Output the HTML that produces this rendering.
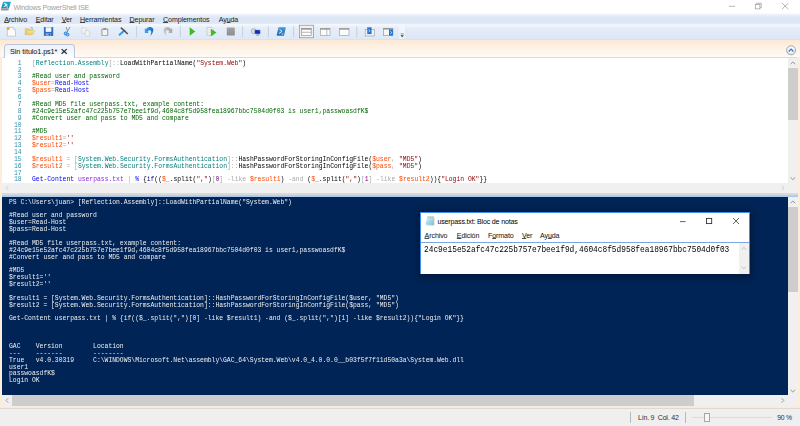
<!DOCTYPE html>
<html lang="es">
<head>
<meta charset="utf-8">
<title>Windows PowerShell ISE</title>
<style>
*{margin:0;padding:0;box-sizing:border-box}
html,body{width:800px;height:426px;overflow:hidden;background:#fff}
body{position:relative;font-family:"Liberation Sans",sans-serif;color:#000}
.abs{position:absolute}
#titlebar{left:0;top:0;width:800px;height:13px;background:#fff}
#title{left:13.4px;top:2.5px;font-size:7.2px;line-height:9px;color:#a0a0a0;white-space:nowrap;letter-spacing:-0.25px}
#menubar{left:0;top:13px;width:800px;height:11px;background:linear-gradient(#fbfcfe 0,#e6eef9 2.5px,#dce6f5 4.5px,#dce6f5 10px,#e6eef9 11px)}
.mi{position:absolute;top:15.8px;font-size:7.1px;line-height:9px;white-space:nowrap;color:#1a1a1a;letter-spacing:-0.1px}
.mi u{text-decoration:underline;text-decoration-thickness:0.5px;text-underline-offset:0.2px;text-decoration-color:rgba(0,0,0,.7)}
#toolbar{left:0;top:23.6px;width:800px;height:17.6px;background:linear-gradient(#e6eef9 0,#f1f6fc 0.7px,#f0f5fc 2.3px,#e5edf9 3.1px,#dce6f4 15.4px,#c6d1e2 15.9px,#c6d1e2 17.6px)}
#tbgroup{left:0;top:24.4px;width:398.5px;height:14.8px;background:linear-gradient(#f4f8fd 0,#eff4fb 2.2px,#e6eef9 3.4px,#dfe8f6 14.8px)}
#tbover{left:398.5px;top:24.4px;width:6.6px;height:14.8px;border-radius:0 2px 2px 0;background:linear-gradient(#f4f8fd,#e8f0fa)}
#tabstrip{left:0;top:40.4px;width:800px;height:17px;background:linear-gradient(#fde8d4 0,#fdeedf 5px,#fef6ee 12px,#fffaf5 17px)}
#tabline{left:0;top:57px;width:800px;height:1px;background:#dadada}
#leftb{left:0;top:57px;width:3px;height:351px;background:#fdeddb}
#rightb{left:797px;top:57px;width:3px;height:351px;background:#fdeddb}
#tab{left:4.2px;top:43.6px;width:70.6px;height:14.4px;border:0.8px solid #bcc6d6;border-bottom:none;border-radius:3.5px 3.5px 0 0;background:linear-gradient(#edf3fc,#f1f6fc 50%,#ffffff)}
#tabtxt{left:10.1px;top:47px;font-size:7.3px;line-height:9px;white-space:nowrap;color:#111;letter-spacing:-0.12px}
#editor{left:1.9px;top:58px;width:786.4px;height:125px;background:#fff}
pre{font-family:"Liberation Mono",monospace;font-size:10.89px;line-height:11.73px;white-space:pre;position:absolute;transform:scale(0.5857);transform-origin:0 0}
#ln{left:11.9px;top:60.2px;width:16.4px;text-align:right;color:#2b91af}
#code{left:32.1px;top:60.2px;color:#000}
.c{color:#006400}.v{color:#ff4500}.k{color:#0000ff}.t{color:#008080}.s{color:#8b0000}.g{color:#a9a9a9}.p{color:#8a2be2}.n{color:#800080}.d{color:#00008b}
#evs{left:788.2px;top:58px;width:9.5px;height:125px;background:#f0f0f0}
#evthumb{left:788.2px;top:67.5px;width:9.5px;height:52px;background:#cdcdcd}
#ehs{left:1.9px;top:183px;width:795.8px;height:10px;background:#f0f0f0}
#split1{left:2.3px;top:192.9px;width:795.4px;height:2.2px;background:#d9d9d9;z-index:2}
#split2{left:2.3px;top:194.6px;width:795.4px;height:2px;background:linear-gradient(#b3d2f3,#a8caf0 75%,#94b8e4);z-index:2}
#console{left:2.3px;top:196.2px;width:786px;height:199.3px;background:#012456}
#cout{left:8.9px;top:199.2px;color:#f0f0f0}
#cvs{left:787.8px;top:196.2px;width:9.9px;height:199.3px;background:#f0f0f0}
#cvthumb{left:787.8px;top:206.8px;width:9.9px;height:84.8px;background:#cdcdcd}
#chs{left:2.3px;top:395.4px;width:795.4px;height:11px;background:#f0f0f0}
#chthumb{left:12px;top:395.4px;width:681.8px;height:11px;background:#cdcdcd}
#botb{left:0;top:405.5px;width:800px;height:3px;background:#fbecda}
#status{left:0;top:407.8px;width:800px;height:18.2px;background:#efefef;border-top:1px solid #dadada}
.st{position:absolute;font-size:7.05px;line-height:9px;white-space:nowrap;color:#2e2e2e;letter-spacing:-0.22px}
.sep{position:absolute;width:0.8px;background:#b8b8b8}
svg{position:absolute;overflow:visible}
/* notepad */
#npshadow{left:417px;top:210.5px;width:336px;height:68px;border-radius:4px;background:rgba(0,8,30,0.35);filter:blur(2.5px)}
#np{left:420px;top:212.3px;width:330px;height:62.1px;background:#fff;border:0.9px solid #3f8dea}
#nptitle{left:437.5px;top:217.6px;font-size:7.1px;line-height:9px;white-space:nowrap;color:#000;letter-spacing:-0.19px}
.nm{position:absolute;top:232.2px;font-size:7.1px;line-height:9px;white-space:nowrap;color:#111;letter-spacing:-0.12px}
.nm u{text-decoration:underline;text-decoration-thickness:0.5px;text-underline-offset:0.2px;text-decoration-color:rgba(0,0,0,.7)}
#nptext{left:420.7px;top:242.3px;width:328.6px;height:31.3px;border-top:0.7px solid #7aa7dd;background:#fff}
#npvs{left:739.2px;top:243px;width:9.6px;height:30.6px;background:#f0f0f0}
#nptxt{left:424.4px;top:244.5px;font-size:14.6px;line-height:17px;color:#000;transform:scale(0.5363,0.5857)}
</style>
</head>
<body>
<div id="titlebar" class="abs"></div>
<div id="title" class="abs">Windows PowerShell ISE</div>
<div id="menubar" class="abs"></div>
<div class="mi" style="left:4.2px"><u>A</u>rchivo</div>
<div class="mi" style="left:35.7px"><u>E</u>ditar</div>
<div class="mi" style="left:61.7px"><u>V</u>er</div>
<div class="mi" style="left:80px"><u>H</u>erramientas</div>
<div class="mi" style="left:129.5px"><u>D</u>epurar</div>
<div class="mi" style="left:163px"><u>C</u>omplementos</div>
<div class="mi" style="left:218.7px">Ay<u>u</u>da</div>
<div id="toolbar" class="abs"></div>
<div id="tbgroup" class="abs"></div><div id="tbover" class="abs"></div>
<div id="tabstrip" class="abs"></div>
<div id="tabline" class="abs"></div>
<div id="leftb" class="abs"></div>
<div id="rightb" class="abs"></div>
<div id="tab" class="abs"></div>
<div id="tabtxt" class="abs">Sin título1.ps1*</div>

<div id="editor" class="abs"></div>
<pre id="ln">1
2
3
4
5
6
7
8
9
10
11
12
13
14
15
16
17
18</pre>
<pre id="code"><span class="g">[</span><span class="t">Reflection.Assembly</span><span class="g">]::</span>LoadWithPartialName<span>(</span><span class="s">"System.Web"</span>)

<span class="c">#Read user and password</span>
<span class="v">$user</span><span class="g">=</span><span class="k">Read-Host</span>
<span class="v">$pass</span><span class="g">=</span><span class="k">Read-Host</span>

<span class="c">#Read MD5 file userpass.txt, example content:</span>
<span class="c">#24c9e15e52afc47c225b757e7bee1f9d,4604c8f5d958fea18967bbc7504d0f03 is user1,passwoasdfK$</span>
<span class="c">#Convert user and pass to MD5 and compare</span>

<span class="c">#MD5</span>
<span class="v">$result1</span><span class="g">=</span><span class="s">''</span>
<span class="v">$result2</span><span class="g">=</span><span class="s">''</span>

<span class="v">$result1</span> <span class="g">=</span> <span class="g">[</span><span class="t">System.Web.Security.FormsAuthentication</span><span class="g">]::</span>HashPasswordForStoringInConfigFile(<span class="v">$user</span><span class="g">,</span> <span class="s">"MD5"</span>)
<span class="v">$result2</span> <span class="g">=</span> <span class="g">[</span><span class="t">System.Web.Security.FormsAuthentication</span><span class="g">]::</span>HashPasswordForStoringInConfigFile(<span class="v">$pass</span><span class="g">,</span> <span class="s">"MD5"</span>)

<span class="k">Get-Content</span> <span class="p">userpass.txt</span> <span class="g">|</span> <span class="k">%</span> {<span class="d">if</span>((<span class="v">$_</span>.split(<span class="s">","</span>)<span class="g">[</span><span class="n">0</span><span class="g">]</span> <span class="g">-like</span> <span class="v">$result1</span>) <span class="g">-and</span> (<span class="v">$_</span>.split(<span class="s">","</span>)<span class="g">[</span><span class="n">1</span><span class="g">]</span> <span class="g">-like</span> <span class="v">$result2</span>)){<span class="s">"Login OK"</span>}}</pre>
<div id="evs" class="abs"></div>
<div id="evthumb" class="abs"></div>
<div id="ehs" class="abs"></div>
<div id="split1" class="abs"></div>
<div id="split2" class="abs"></div>

<div id="console" class="abs"></div>
<pre id="cout">PS C:\Users\juan&gt; [Reflection.Assembly]::LoadWithPartialName("System.Web")

#Read user and password
$user=Read-Host
$pass=Read-Host

#Read MD5 file userpass.txt, example content:
#24c9e15e52afc47c225b757e7bee1f9d,4604c8f5d958fea18967bbc7504d0f03 is user1,passwoasdfK$
#Convert user and pass to MD5 and compare

#MD5
$result1=''
$result2=''

$result1 = [System.Web.Security.FormsAuthentication]::HashPasswordForStoringInConfigFile($user, "MD5")
$result2 = [System.Web.Security.FormsAuthentication]::HashPasswordForStoringInConfigFile($pass, "MD5")

Get-Content userpass.txt | % {if(($_.split(",")[0] -like $result1) -and ($_.split(",")[1] -like $result2)){"Login OK"}}



GAC    Version        Location
---    -------        --------
True   v4.0.30319     C:\WINDOWS\Microsoft.Net\assembly\GAC_64\System.Web\v4.0_4.0.0.0__b03f5f7f11d50a3a\System.Web.dll
user1
passwoasdfK$
Login OK</pre>
<div id="cvs" class="abs"></div>
<div id="cvthumb" class="abs"></div>
<div id="chs" class="abs"></div>
<div id="chthumb" class="abs"></div>
<div id="botb" class="abs"></div>
<div id="status" class="abs"></div>
<div class="sep" style="left:630.4px;top:412px;height:10.6px"></div>
<div class="sep" style="left:685.2px;top:412px;height:10.6px"></div>
<div class="st" style="left:638px;top:412.6px">Lín. 9&nbsp; Col. 42</div>
<div class="st" style="left:777.2px;top:413px;font-size:6.8px">90 %</div>
<div class="abs" style="left:692px;top:416.7px;width:80px;height:1px;background:#dcdcdc"></div>
<div class="abs" style="left:704.4px;top:413px;width:5.4px;height:9px;background:#f6f6f6;border:0.7px solid #a6a6a6"></div>

<!-- notepad -->
<div id="npshadow" class="abs"></div>
<div id="np" class="abs"></div>
<div id="nptitle" class="abs">userpass.txt: Bloc de notas</div>
<div class="nm" style="left:424.6px"><u>A</u>rchivo</div>
<div class="nm" style="left:456.8px"><u>E</u>dición</div>
<div class="nm" style="left:488px">F<u>o</u>rmato</div>
<div class="nm" style="left:522px"><u>V</u>er</div>
<div class="nm" style="left:540px">Ay<u>u</u>da</div>
<div id="nptext" class="abs"></div>
<div id="npvs" class="abs"></div>
<pre id="nptxt">24c9e15e52afc47c225b757e7bee1f9d,4604c8f5d958fea18967bbc7504d0f03</pre>

<svg id="icons" width="800" height="426" viewBox="0 0 800 426" style="left:0;top:0">
<defs>
<linearGradient id="gps" x1="0" y1="0" x2="0" y2="1"><stop offset="0" stop-color="#2aa8d8"/><stop offset="1" stop-color="#1488bc"/></linearGradient>
<linearGradient id="gfold" x1="0" y1="0" x2="0" y2="1"><stop offset="0" stop-color="#f7e7a0"/><stop offset="1" stop-color="#e8c860"/></linearGradient>
<linearGradient id="gcirc" x1="0" y1="0" x2="0" y2="1"><stop offset="0" stop-color="#ffffff"/><stop offset="1" stop-color="#dfe6f0"/></linearGradient>
<linearGradient id="gundo" x1="0" y1="0" x2="1" y2="0"><stop offset="0" stop-color="#3fa8ee"/><stop offset="1" stop-color="#1a68be"/></linearGradient>
<linearGradient id="gredo" x1="0" y1="0" x2="1" y2="0"><stop offset="0" stop-color="#a6a6a6"/><stop offset="1" stop-color="#c4c4c4"/></linearGradient>
<linearGradient id="gps2" x1="0" y1="0" x2="0" y2="1"><stop offset="0" stop-color="#4298da"/><stop offset="1" stop-color="#1f6cb6"/></linearGradient>
<linearGradient id="gstop" x1="0" y1="0" x2="0" y2="1"><stop offset="0" stop-color="#a4a4a4"/><stop offset="1" stop-color="#8c8c8c"/></linearGradient>
<linearGradient id="gnote" x1="0" y1="0" x2="1" y2="1"><stop offset="0" stop-color="#dff4f8"/><stop offset="1" stop-color="#6fc1d8"/></linearGradient>
</defs>
<!-- title icon -->
<path d="M3.1 1.8 L10.9 1.8 L9 8.3 L1.2 8.3 Z" fill="url(#gps)"/>
<path d="M1.2 8.3 L9 8.3 L8.4 10.5 L0.9 10.5 Z" fill="#8b9ca3"/>
<path d="M4.3 3.2 L6.9 5 L3.7 6.9" fill="none" stroke="#fff" stroke-width="1.05"/>
<path d="M6.3 7 L8.1 7" stroke="#fff" stroke-width="0.9"/>
<!-- window controls -->
<path d="M729 6.3 H735.2" stroke="#a6a6a6" stroke-width="0.8"/>
<rect x="755.3" y="4.5" width="4.6" height="4.4" fill="#fff" stroke="#999" stroke-width="0.7"/>
<path d="M756.6 4.4 V3.2 H761.2 V7.7 H760" fill="none" stroke="#999" stroke-width="0.7"/>
<path d="M782 3 L788.4 9.2 M788.4 3 L782 9.2" stroke="#999" stroke-width="0.75"/>
<!-- toolbar: new -->
<path d="M7.4 27.4 H13.2 L15.5 29.8 V36.2 H7.4 Z" fill="#fdfdfd" stroke="#b9bcc2" stroke-width="0.7"/>
<path d="M13.2 27.4 V29.8 H15.5" fill="#e8e8e8" stroke="#b9bcc2" stroke-width="0.5"/>
<circle cx="8.2" cy="28.4" r="1.5" fill="#f7a62c"/>
<!-- open -->
<path d="M25.2 34.8 V28.6 H28.4 L29.4 29.6 H33 V31 H27.4 Z" fill="#e9cf70" stroke="#d4b553" stroke-width="0.4"/>
<path d="M25.2 34.8 L27.6 30.6 H34.8 L32.6 34.8 Z" fill="url(#gfold)" stroke="#d8b858" stroke-width="0.4"/>
<path d="M30.5 28 Q32.2 27 33 28.6" fill="none" stroke="#3b8edb" stroke-width="0.7"/>
<!-- save -->
<rect x="43.9" y="26.9" width="9.3" height="9.1" rx="0.6" fill="#2e6fc4"/>
<rect x="45.7" y="27.3" width="5.6" height="4.6" fill="#f4f6fa"/>
<rect x="45.7" y="27.3" width="5.6" height="1" fill="#cfd6e2"/>
<rect x="45.6" y="33.2" width="5.2" height="2.8" fill="#8fa3bf"/>
<rect x="48.7" y="33.7" width="1.3" height="1.9" fill="#2a5aa8"/>
<!-- cut -->
<path d="M66.3 27 L67.6 32 M70 27 L67 32.2" stroke="#7f8a99" stroke-width="0.9"/>
<ellipse cx="65.7" cy="33.5" rx="1.5" ry="1.5" fill="#8cc0f0" stroke="#2b86e0" stroke-width="1"/>
<ellipse cx="67.6" cy="34.6" rx="1.4" ry="1.4" fill="#8cc0f0" stroke="#2b86e0" stroke-width="1"/>
<!-- copy (disabled) -->
<path d="M81.9 27.8 H85 L86.4 29.2 V33.4 H81.9 Z" fill="#f3f3f3" stroke="#c9c9c9" stroke-width="0.6"/>
<path d="M85.2 30.4 H88.2 L89.7 31.9 V36.2 H85.2 Z" fill="#f3f3f3" stroke="#c9c9c9" stroke-width="0.6"/>
<!-- paste -->
<rect x="101.3" y="28.8" width="7" height="7.2" rx="0.5" fill="#a8a8a8"/>
<rect x="102.5" y="29.8" width="4.6" height="5.3" fill="#f2f2f2"/>
<rect x="103.2" y="28.1" width="3.2" height="1.6" fill="#8e8e8e"/>
<!-- clear -->
<path d="M119.6 34.8 L124.4 30.5" stroke="#2f9be6" stroke-width="1.9" stroke-linecap="round"/>
<path d="M120.9 27.6 L127.8 34" stroke="#4b4f57" stroke-width="1.5"/>
<!-- sep -->
<g stroke="#b9c4d6" stroke-width="0.7">
<path d="M136.6 26 V37.2 M180.3 26 V37.2 M242.6 26 V37.2 M268.4 26 V37.2 M293.6 26 V37.2 M356.8 26 V37.2"/>
</g>
<!-- undo -->
<path d="M144.8 28.6 L144.8 32.9 L148.6 32.9 L147.6 31.4 C150 29.2 152.7 30.4 150.3 35.9 C154.3 32.2 154.3 27.6 150.5 27 C148.6 26.8 147 27.6 146.2 28.9 Z" fill="url(#gundo)"/>
<!-- redo -->
<path transform="translate(317 0) scale(-1 1)" d="M144.8 28.6 L144.8 32.9 L148.6 32.9 L147.6 31.4 C150 29.2 152.7 30.4 150.3 35.9 C154.3 32.2 154.3 27.6 150.5 27 C148.6 26.8 147 27.6 146.2 28.9 Z" fill="url(#gredo)"/>
<!-- run -->
<path d="M189.7 27.3 L195.3 31.5 L189.7 35.7 Z" fill="#3dbb22"/>
<!-- run selection -->
<path d="M207 27.4 H211.6 L213.3 29.1 V35.2 H207 Z" fill="#f6f6f6" stroke="#b3b3b3" stroke-width="0.6"/>
<path d="M208.3 29.4 H211.5 M208.3 31 H211 M208.3 32.6 H210.6" stroke="#c5c5c5" stroke-width="0.5"/>
<path d="M210.9 28.7 L216.5 32.5 L210.9 36.3 Z" fill="#3dbb22"/>
<!-- stop -->
<rect x="226.8" y="27.5" width="8" height="8" rx="0.8" fill="url(#gstop)"/>
<!-- remote -->
<circle cx="253.7" cy="31.1" r="2.5" fill="#d3dee8" stroke="#8797a6" stroke-width="0.55"/>
<rect x="254.9" y="30" width="5.2" height="3.9" fill="#0e2cc4" stroke="#7f8aa6" stroke-width="0.4"/>
<path d="M258 30.3 L259.8 30.3 L259.8 32 Z" fill="#3f63e6"/>
<path d="M256.2 35 H259.2" stroke="#666" stroke-width="0.7"/>
<!-- ps console -->
<path d="M279 27.3 L285.3 27.3 Q285.9 27.3 285.7 28 L284.1 35.2 Q284 35.8 283.4 35.8 L277.1 35.8 Q276.5 35.8 276.7 35.1 L278.3 27.9 Q278.5 27.3 279 27.3 Z" fill="url(#gps2)"/>
<path d="M279.6 29.4 L282 31.4 L279 33.5" fill="none" stroke="#fff" stroke-width="0.9"/>
<path d="M281.6 34 L283.4 34" stroke="#fff" stroke-width="0.8"/>
<!-- layout selected -->
<rect x="299.6" y="25.2" width="13.8" height="12.6" fill="#f1f1f1" stroke="#848484" stroke-width="0.65"/>
<rect x="301.6" y="28.4" width="9.6" height="7.1" fill="#fbfbfb" stroke="#868686" stroke-width="0.6"/>
<rect x="301.6" y="28.4" width="9.6" height="1.2" fill="#868686"/>
<path d="M301.6 32.3 H311.2" stroke="#868686" stroke-width="0.55"/>
<!-- layout 2 -->
<rect x="320.4" y="28.4" width="9.6" height="7.1" fill="#fbfbfb" stroke="#969696" stroke-width="0.6"/>
<rect x="320.4" y="28.4" width="9.6" height="1.2" fill="#8e8e8e"/>
<path d="M326.8 28.4 V35.5" stroke="#969696" stroke-width="0.6"/>
<!-- layout 3 -->
<rect x="339.4" y="28.4" width="9.6" height="7.1" fill="#fbfbfb" stroke="#969696" stroke-width="0.6"/>
<rect x="339.4" y="28.4" width="9.6" height="1.2" fill="#8e8e8e"/>
<!-- show script pane top -->
<rect x="365.2" y="29.4" width="9.2" height="6.6" fill="#f3f3f3" stroke="#9a9a9a" stroke-width="0.6"/>
<rect x="367.3" y="27.4" width="4.2" height="6.6" fill="#1f6fd0" stroke="#8a8a8a" stroke-width="0.3"/>
<path d="M368.5 29.4 L370.2 30.7 L368.5 32" fill="none" stroke="#fff" stroke-width="0.7"/>
<!-- show script pane right -->
<rect x="383.6" y="28.3" width="9.3" height="7.2" fill="#f6f6f6" stroke="#8a8a8a" stroke-width="0.6"/>
<rect x="383.6" y="28.3" width="9.3" height="1.2" fill="#8a8a8a"/>
<rect x="389" y="29.5" width="3.9" height="6" fill="#1f6fd0"/>
<path d="M390.2 31.2 L391.9 32.5 L390.2 33.8" fill="none" stroke="#fff" stroke-width="0.7"/>
<!-- overflow -->
<path d="M400.7 33.9 H403.7" stroke="#666" stroke-width="0.7"/>
<path d="M400.5 35.3 H403.9 L402.2 37.2 Z" fill="#3a3a3a"/>
<!-- tab close -->
<path d="M61.6 49.1 L66.7 53.8 M66.7 49.1 L61.6 53.8" stroke="#2a2a2a" stroke-width="1.25"/>
<!-- collapse button -->
<circle cx="791.1" cy="50.3" r="4.5" fill="url(#gcirc)" stroke="#9c9c9c" stroke-width="0.9"/>
<path d="M788.7 51.5 L791.1 49.1 L793.5 51.5" fill="none" stroke="#3273d6" stroke-width="1.15"/>
<!-- scrollbar arrows: editor -->
<g fill="none" stroke="#858585" stroke-width="0.85">
<path d="M790.6 64.2 L792.9 62 L795.2 64.2"/>
<path d="M790.6 177.4 L792.9 179.6 L795.2 177.4"/>
<path d="M790.6 203.2 L792.9 201 L795.2 203.2"/>
<path d="M790.5 389.8 L792.8 392 L795.1 389.8"/>
</g>
<g fill="none" stroke="#c3c3c3" stroke-width="0.8">
<path d="M8.2 186 L6 188.2 L8.2 190.4"/>
<path d="M781.8 186 L784 188.2 L781.8 190.4"/>
</g>
<g fill="none" stroke="#8a8a8a" stroke-width="0.85">
<path d="M8.2 398.2 L6 400.4 L8.2 402.6"/>
<path d="M781.6 398.2 L783.8 400.4 L781.6 402.6"/>
</g>
<!-- notepad icon -->
<path d="M428 217.6 L434.7 217.6 L434.6 225.7 L426.6 225.7 Z" fill="#e7dcc3"/>
<path d="M427.4 216.8 L434 216.8 L433.8 224.9 L425.3 224.6 Z" fill="url(#gnote)"/>
<path d="M427.4 216.6 L434 216.6 L434 217.5 L427.2 217.5 Z" fill="#a9c0c8"/>
<!-- notepad controls -->
<path d="M680 221.6 H685.6" stroke="#222" stroke-width="0.7"/>
<rect x="706.5" y="218.4" width="5.2" height="5.2" fill="none" stroke="#2a2a2a" stroke-width="0.85"/>
<path d="M733.1 218 L739 224 M739 218 L733.1 224" stroke="#222" stroke-width="0.7"/>
<g fill="none" stroke="#b5b5b5" stroke-width="0.8">
<path d="M741.6 249.6 L743.9 247.4 L746.2 249.6"/>
<path d="M741.6 266.6 L743.9 268.8 L746.2 266.6"/>
</g>
</svg>
</body>
</html>
